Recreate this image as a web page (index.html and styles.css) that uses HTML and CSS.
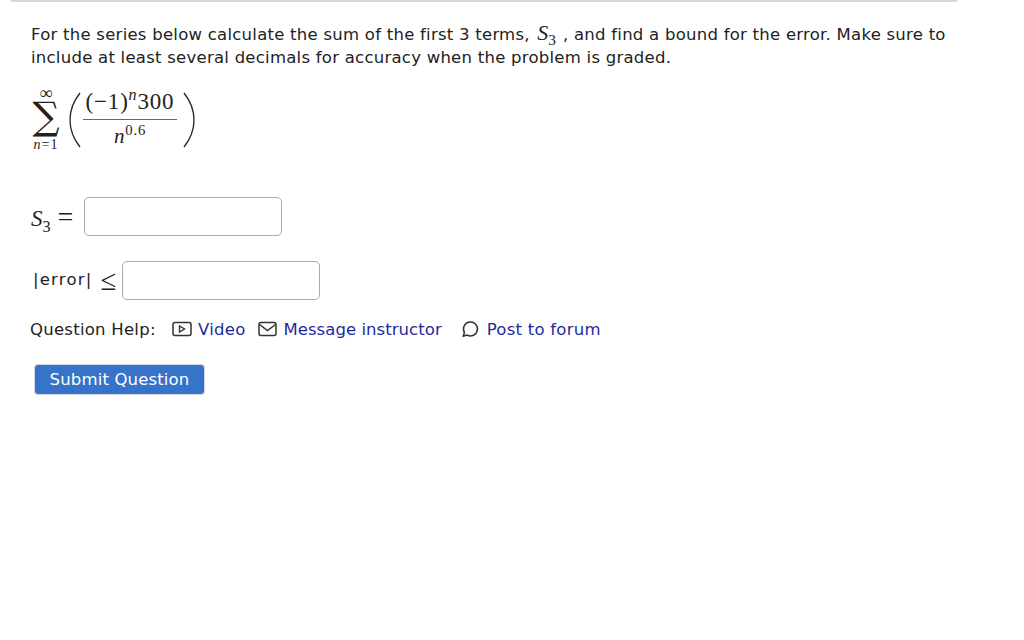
FILE: index.html
```html
<!DOCTYPE html>
<html lang="en">
<head>
<meta charset="utf-8">
<title>Question</title>
<link rel="stylesheet" href="styles.css">
</head>
<body>
<div class="topcard"></div>
<main class="question">
  <p class="prompt">For the series below calculate the sum of the first 3 terms, <span class="math"><i>S</i><sub>3</sub></span>, and find a bound for the error. Make sure to include at least several decimals for accuracy when the problem is graded.</p>

  <div class="series math">
    <div class="sum">
      <span class="sum-top">∞</span>
      <span class="sigma">∑</span>
      <span class="sum-bot"><i>n</i>=1</span>
    </div>
    <svg class="paren" width="13" height="56" viewBox="0 0 13 56"><path d="M12 1C4 11 2 19 2 28s2 17 10 27" fill="none" stroke="#222" stroke-width="1.3"/></svg>
    <div class="frac">
      <div class="num">(−1)<sup><i>n</i></sup>300</div>
      <div class="den"><i>n</i><sup>0.6</sup></div>
    </div>
    <svg class="paren" width="13" height="56" viewBox="0 0 13 56"><path d="M1 1c8 10 10 18 10 27s-2 17-10 27" fill="none" stroke="#222" stroke-width="1.3"/></svg>
  </div>

  <div class="answer answer-s">
    <span class="math label-s"><span><i>S</i><sub>3</sub></span><span class="rel">=</span></span>
    <span class="field"></span>
  </div>

  <div class="answer answer-e">
    <span class="label-e">|error|</span>
    <span class="math rel-le">≤</span>
    <span class="field"></span>
  </div>

  <div class="help">
    <span class="help-label">Question Help:</span>
    <span class="help-item item-video">
      <svg width="20" height="16" viewBox="0 0 20 16"><rect x="1" y="1.5" width="18" height="13" rx="2" fill="none" stroke="#333" stroke-width="1.5"/><path d="M7.5 5v6l5-3z" fill="none" stroke="#333" stroke-width="1.4"/></svg>
      <a href="#">Video</a>
    </span>
    <span class="help-item item-msg">
      <svg width="19" height="16" viewBox="0 0 19 16"><rect x="1" y="1.5" width="17" height="13" rx="2" fill="none" stroke="#333" stroke-width="1.5"/><path d="M1.5 3.5 9.5 9.5l8-6" fill="none" stroke="#333" stroke-width="1.5"/></svg>
      <a href="#" class="msg-link">Message instructor</a>
    </span>
    <span class="help-item item-forum">
      <svg width="18" height="18" viewBox="0 0 18 18"><path d="M2.2 16.2 3.4 12.4A7 7 0 1 1 6 15z" fill="none" stroke="#333" stroke-width="1.5" stroke-linejoin="round"/></svg>
      <a href="#">Post to forum</a>
    </span>
  </div>

  <button class="submit" type="button">Submit Question</button>
</main>
</body>
</html>
```
FILE: styles.css
```css
html, body { margin: 0; padding: 0; background: #fff; }
body { width: 1024px; height: 640px; overflow: hidden; font-family: "DejaVu Sans", sans-serif; color: #222; }
.topcard { width: 948px; height: 2px; margin-left: 10px; background: #d8d8d8; border-radius: 0 0 3px 3px; }
.question { padding: 21px 0 0 31px; font-size: 16.5px; letter-spacing: 0.25px; }
.prompt { margin: 0; width: 925px; line-height: 23px; }
.math { font-family: "Liberation Serif", serif; letter-spacing: 0; }
.prompt .math { font-size: 22px; line-height: 0; margin-left: 2px; margin-right: 7px; }
sub { font-size: 70%; line-height: 0; }
sup { font-size: 70%; line-height: 0; }
.series { display: flex; align-items: flex-start; margin-top: 18px; height: 72px; }
.sum { display: flex; flex-direction: column; align-items: center; width: 30px; margin-top: 2px; }
.sum-top { font-size: 18px; line-height: 8px; }
.sigma { font-size: 38px; line-height: 38px; font-family: "DejaVu Serif", serif; }
.sum-bot { font-size: 14px; line-height: 14px; letter-spacing: 1px; margin-top: 3px; }
.paren { margin-left: 7px; margin-top: 5px; }
.frac { display: flex; flex-direction: column; align-items: center; width: 94px; margin: 0 -1px 0 2px; font-size: 23px; letter-spacing: 0.8px; }
.num { width: 100%; text-align: center; border-bottom: 1px solid #666; line-height: 30px; height: 32px; }
.den { line-height: 33px; font-size: 21px; }
.answer { display: flex; align-items: center; }
.answer-s { height: 39px; margin-top: 38px; }
.answer-e { margin-top: 25px; height: 39px; }
.label-s { font-size: 23px; width: 53px; display: flex; align-items: baseline; gap: 7px; }
.rel { font-size: 28px; }
.label-e { margin: -3px 0 0 2px; letter-spacing: 1.2px; }
.rel-le { font-size: 29px; margin-left: 8px; margin-right: 6px; letter-spacing: 0; }
.field { display: block; box-sizing: border-box; width: 198px; height: 39px; border: 1px solid #aaa; border-radius: 5px; background: #fff; }
.help { display: flex; align-items: center; margin-top: 17px; margin-left: -1px; height: 24px; }
.help-label { width: 142px; }
.help-item { display: flex; align-items: center; gap: 6px; }
.help a { color: #1f2a9c; text-decoration: none; }
.help a.msg-link { letter-spacing: 0.05px; }
.item-msg { margin-left: 13px; }
.item-forum { margin-left: 19px; gap: 8px; }
.submit { display: block; margin: 23px 0 0 3px; width: 171px; height: 31px; padding: 0; border: 1px solid #cfd6e0; border-radius: 4px; background: #3673c9; color: #fff; font-family: "DejaVu Sans", sans-serif; font-size: 16.5px; letter-spacing: 0.15px; }
```
